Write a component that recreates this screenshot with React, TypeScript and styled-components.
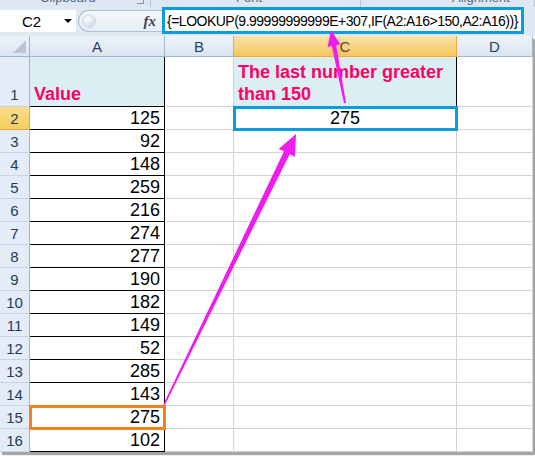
import React from 'react';
import styled, { createGlobalStyle } from 'styled-components';

const GlobalStyle = createGlobalStyle`
    body {
        margin: 0;
        background: #ffffff;
        font-family: "Liberation Sans", Arial, sans-serif;
    }
`;

const HEADER_BORDER = '#9eb6ce';
const GRID = '#d4d4d4';
const PINK = '#ff0066';
const MAGENTA = '#ef1cef';

const Window = styled.div`
    position: relative;
    width: 535px;
    height: 456px;
    overflow: hidden;
    background: #ffffff;
`;

const Ribbon = styled.div`
    display: flex;
    height: 7px;
    overflow: hidden;
    background: #dde7f3;
`;

const RibbonGroup = styled.div<{ $width: number; $pad: number }>`
    position: relative;
    width: ${p => p.$width}px;
    flex: none;
    padding-left: ${p => p.$pad}px;
    box-sizing: border-box;
    border-right: 1px solid #b6c6da;
    font-size: 13px;
    line-height: 13px;
    color: #5a6a80;
`;

const RibbonLabel = styled.div`
    margin-top: -9px;
`;

const Launcher = styled.span`
    position: absolute;
    right: 6px;
    top: -3px;
    width: 6px;
    height: 6px;
    border-right: 1px solid #8797ad;
    border-bottom: 1px solid #8797ad;
`;

const FormulaBar = styled.div`
    display: flex;
    align-items: flex-start;
    height: 29px;
    background: #dfe8f3;
`;

const NameBox = styled.div`
    display: flex;
    align-items: center;
    justify-content: space-between;
    width: 76px;
    height: 22px;
    margin-top: 3px;
    padding: 0 4px 0 22px;
    box-sizing: border-box;
    background: #ffffff;
    font-size: 15px;
    color: #000;
`;

const DropArrow = styled.span`
    width: 0;
    height: 0;
    border-left: 4px solid transparent;
    border-right: 4px solid transparent;
    border-top: 4px solid #000;
`;

const FxArea = styled.div`
    display: flex;
    align-items: center;
    justify-content: space-between;
    width: 84px;
    height: 22px;
    margin: 3px 0 0 2px;
    padding: 0 6px 0 3px;
    box-sizing: border-box;
    border: 1px solid #b0c0d4;
    border-right: none;
    border-radius: 12px 0 0 12px;
    background: linear-gradient(#f6f9fc, #e6edf6);
`;

const Knob = styled.span`
    width: 12px;
    height: 12px;
    border-radius: 50%;
    background: radial-gradient(circle at 40% 35%, #ffffff, #c3cfdd);
    border: 1px solid #d0dae6;
`;

const Fx = styled.span`
    font-family: "Liberation Serif", "Times New Roman", serif;
    font-style: italic;
    font-weight: bold;
    font-size: 15px;
    color: #3a4458;
`;

const FormulaBox = styled.div`
    display: flex;
    align-items: center;
    width: 362px;
    height: 27px;
    padding-left: 2px;
    box-sizing: border-box;
    border: 3px solid #0b9de0;
    background: #ffffff;
    font-size: 14px;
    letter-spacing: -0.5px;
    white-space: nowrap;
    color: #000;
`;

const Sheet = styled.div`
    display: grid;
    grid-template-columns: 30px 135px 69px 223px 76px;
    grid-template-rows: 21px 50px repeat(15, 23px);
    width: 533px;
    box-shadow: 2px 3px 1px rgba(0, 0, 0, 0.35);
`;

const Corner = styled.div`
    display: flex;
    align-items: flex-end;
    justify-content: flex-end;
    padding: 0 3px 3px 0;
    box-sizing: border-box;
    background: linear-gradient(#eef3fa, #dce5f0);
    border-right: 1px solid ${HEADER_BORDER};
    border-bottom: 1px solid ${HEADER_BORDER};
`;

const ColHeader = styled.div<{ $active?: boolean }>`
    display: flex;
    align-items: center;
    justify-content: center;
    box-sizing: border-box;
    font-size: 15px;
    color: ${p => (p.$active ? '#5a4a2a' : '#27415f')};
    background: ${p => (p.$active ? 'linear-gradient(#fbe3a9, #f4c55f)' : 'linear-gradient(#eef3fa, #dae4f0)')};
    border-right: 1px solid ${p => (p.$active ? '#f1a83d' : HEADER_BORDER)};
    border-bottom: 1px solid ${p => (p.$active ? '#f1a83d' : HEADER_BORDER)};
`;

const RowHeader = styled.div<{ $active?: boolean; $tall?: boolean }>`
    display: flex;
    align-items: ${p => (p.$tall ? 'flex-end' : 'center')};
    justify-content: center;
    padding-bottom: ${p => (p.$tall ? '3px' : '0')};
    box-sizing: border-box;
    font-size: 15px;
    color: #1f3a5c;
    background: ${p => (p.$active ? 'linear-gradient(#fbdc8a, #f7cf5f)' : '#e4ecf7')};
    border-right: 1px solid ${p => (p.$active ? '#e9a13a' : HEADER_BORDER)};
    border-bottom: 1px solid ${p => (p.$active ? '#e9a13a' : '#c5d3e4')};
`;

const Cell = styled.div<{ $align?: 'left' | 'right' | 'center'; $bg?: string; $edge?: string; $ring?: string; $tall?: boolean }>`
    position: relative;
    display: flex;
    align-items: ${p => (p.$tall ? 'flex-end' : 'center')};
    justify-content: ${p => (p.$align === 'right' ? 'flex-end' : p.$align === 'center' ? 'center' : 'flex-start')};
    padding: ${p => (p.$tall ? '0 4px 1px 4px' : '0 4px')};
    box-sizing: border-box;
    font-size: 18px;
    color: #000;
    background: ${p => p.$bg || '#ffffff'};
    border-right: 1px solid ${p => p.$edge || GRID};
    border-bottom: 1px solid ${p => p.$edge || GRID};
    ${p => p.$ring && `
        outline: 3px solid ${p.$ring};
        outline-offset: -2px;
        z-index: 1;
    `}
`;

const Title = styled.span`
    font-weight: bold;
    color: ${PINK};
    line-height: 22px;
`;

const Arrows = styled.svg`
    position: absolute;
    left: 0;
    top: 0;
    pointer-events: none;
    z-index: 5;
`;

const values = [125, 92, 148, 259, 216, 274, 277, 190, 182, 149, 52, 285, 143, 275, 102];

const App: React.FC = () => (
    <Window>
        <GlobalStyle />
        <Ribbon>
            <RibbonGroup $width={151} $pad={40}>
                <RibbonLabel>Clipboard</RibbonLabel>
                <Launcher />
            </RibbonGroup>
            <RibbonGroup $width={210} $pad={85}>
                <RibbonLabel>Font</RibbonLabel>
            </RibbonGroup>
            <RibbonGroup $width={174} $pad={91}>
                <RibbonLabel>Alignment</RibbonLabel>
            </RibbonGroup>
        </Ribbon>
        <FormulaBar>
            <NameBox>
                C2
                <DropArrow />
            </NameBox>
            <FxArea>
                <Knob />
                <Fx>fx</Fx>
            </FxArea>
            <FormulaBox>{'{=LOOKUP(9.99999999999E+307,IF(A2:A16>150,A2:A16))}'}</FormulaBox>
        </FormulaBar>
        <Sheet>
            <Corner>
                <svg width="13" height="13" viewBox="0 0 13 13">
                    <polygon points="13,0 13,13 0,13" fill="#b7c5d6" />
                </svg>
            </Corner>
            <ColHeader>A</ColHeader>
            <ColHeader>B</ColHeader>
            <ColHeader $active>C</ColHeader>
            <ColHeader>D</ColHeader>

            <RowHeader $tall>1</RowHeader>
            <Cell $tall $bg="#dbeef4" $edge="#000">
                <Title>Value</Title>
            </Cell>
            <Cell />
            <Cell $tall $bg="#dbeef4" $edge="#000">
                <Title>The last number greater than 150</Title>
            </Cell>
            <Cell />

            {values.map((v, i) => {
                const row = i + 2;
                return (
                    <React.Fragment key={row}>
                        <RowHeader $active={row === 2}>{row}</RowHeader>
                        <Cell $align="right" $edge="#000" $ring={row === 15 ? '#f6821f' : undefined}>
                            {v}
                        </Cell>
                        <Cell />
                        <Cell $align="center" $ring={row === 2 ? '#0b9de0' : undefined}>
                            {row === 2 ? 275 : ''}
                        </Cell>
                        <Cell />
                    </React.Fragment>
                );
            })}
        </Sheet>
        <Arrows width="535" height="456" viewBox="0 0 535 456">
            <polygon
                fill={MAGENTA}
                points="331,30 340.4,44.5 336.2,45.3 346,102.8 344,103.2 331.8,46.1 327.6,46.9"
            />
            <polygon
                fill={MAGENTA}
                points="296,134 294.9,156.8 289.7,154.3 164.7,405.4 163.3,404.6 283.9,151.5 278.7,149"
            />
        </Arrows>
    </Window>
);

export default App;
